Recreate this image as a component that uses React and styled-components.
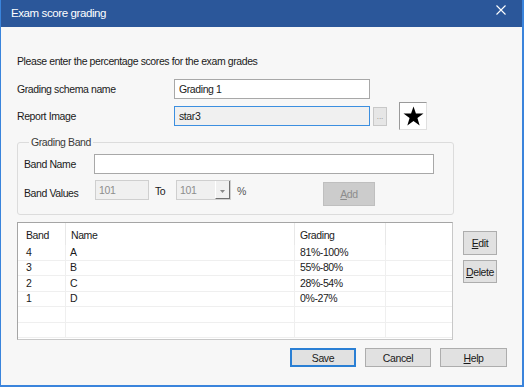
// 시험 점수 등급 설정 대화상자
import styled, { createGlobalStyle } from "styled-components";

const GlobalStyle = createGlobalStyle`
  html, body {
    margin: 0;
    padding: 0;
    background: #f7f7f7;
  }
  * {
    box-sizing: border-box;
  }
`;

const bands = [
  { band: "4", name: "A", grading: "81%-100%" },
  { band: "3", name: "B", grading: "55%-80%" },
  { band: "2", name: "C", grading: "28%-54%" },
  { band: "1", name: "D", grading: "0%-27%" },
  { band: "", name: "", grading: "" },
  { band: "", name: "", grading: "" },
];

function StarIcon() {
  return (
    <svg width="21" height="20" viewBox="0 0 24 23">
      <polygon
        points="12,0.5 14.8,8.6 23.5,8.7 16.5,13.9 19.1,22.3 12,17.3 4.9,22.3 7.5,13.9 0.5,8.7 9.2,8.6"
        fill="#000"
      />
    </svg>
  );
}

function CloseIcon() {
  return (
    <svg width="10" height="10" viewBox="0 0 10 10">
      <path d="M0.5 0.5 L9.5 9.5 M9.5 0.5 L0.5 9.5" stroke="#fff" strokeWidth="1.1" />
    </svg>
  );
}

function App() {
  return (
    <>
      <GlobalStyle />
      <Window>
        <TitleBar>
          <TitleText>Exam score grading</TitleText>
          <CloseButton>
            <CloseIcon />
          </CloseButton>
        </TitleBar>
        <Content>
          <Intro>Please enter the percentage scores for the exam grades</Intro>

          <FormRow>
            <Label>Grading schema name</Label>
            <TextBox $width={196} defaultValue="Grading 1" />
          </FormRow>

          <FormRow $tall>
            <Label>Report Image</Label>
            <TextBox $width={196} $focused defaultValue="star3" />
            <BrowseButton>...</BrowseButton>
            <ImageBox>
              <StarIcon />
            </ImageBox>
          </FormRow>

          <GroupBox>
            <Legend>Grading Band</Legend>
            <BandRow>
              <BandLabel>Band Name</BandLabel>
              <TextBox $width={340} />
            </BandRow>
            <BandRow $gap>
              <BandLabel>Band Values</BandLabel>
              <DisabledBox>101</DisabledBox>
              <ToLabel>To</ToLabel>
              <Combo>
                <span>101</span>
                <ComboArrow>
                  <svg width="5" height="3" viewBox="0 0 5 3">
                    <path d="M0 0 L5 0 L2.5 3 Z" fill="#888" />
                  </svg>
                </ComboArrow>
              </Combo>
              <Percent>%</Percent>
              <AddButton disabled>
                <u>A</u>dd
              </AddButton>
            </BandRow>
          </GroupBox>

          <TableArea>
            <Table>
              <HeaderRow>
                <HeadCell $w={48} $pad={8}>Band</HeadCell>
                <HeadCell $w={229} $pad={5}>Name</HeadCell>
                <HeadCell $w={91} $pad={5}>Grading</HeadCell>
                <HeadCell $w={66} $pad={5} $last></HeadCell>
              </HeaderRow>
              {bands.map((b, i) => (
                <BodyRow key={i}>
                  <Cell $w={48} $pad={8}>{b.band}</Cell>
                  <Cell $w={229} $pad={4}>{b.name}</Cell>
                  <Cell $w={91} $pad={5}>{b.grading}</Cell>
                  <Cell $w={66} $pad={5} $last></Cell>
                </BodyRow>
              ))}
            </Table>
            <SideButtons>
              <DialogButton $w={34} $h={24}>
                <u>E</u>dit
              </DialogButton>
              <DialogButton $w={34} $h={23}>
                <u>D</u>elete
              </DialogButton>
            </SideButtons>
          </TableArea>

          <Footer>
            <DialogButton $w={66} $h={19} $primary>Save</DialogButton>
            <DialogButton $w={66} $h={19}>Cancel</DialogButton>
            <DialogButton $w={67} $h={19}>
              <u>H</u>elp
            </DialogButton>
          </Footer>
        </Content>
      </Window>
    </>
  );
}

const font = `"Liberation Sans", Arial, sans-serif`;

const Window = styled.div`
  width: 524px;
  height: 387px;
  display: flex;
  flex-direction: column;
  background: #f7f7f7;
  border-left: 1px solid #3a84dc;
  border-right: 2px solid #3a84dc;
  border-bottom: 2px solid #3a84dc;
  font-family: ${font};
  font-size: 10.5px;
  letter-spacing: -0.4px;
  color: #1a1a1a;
`;

const TitleBar = styled.div`
  height: 27px;
  flex: none;
  display: flex;
  align-items: center;
  justify-content: space-between;
  background: #2b579a;
  padding: 0 16px 2px 10px;
`;

const TitleText = styled.span`
  color: #ffffff;
  font-size: 11.5px;
  letter-spacing: -0.4px;
`;

const CloseButton = styled.span`
  display: flex;
  margin-top: -6px;
`;

const Content = styled.div`
  flex: 1;
  display: flex;
  flex-direction: column;
  padding: 0 0 0 16px;
`;

const Intro = styled.div`
  margin-top: 28px;
  height: 13px;
  line-height: 13px;
`;

const FormRow = styled.div`
  display: flex;
  align-items: center;
  height: ${(p) => (p.$tall ? "28px" : "20px")};
  margin-top: ${(p) => (p.$tall ? "3px" : "11px")};
`;

const Label = styled.span`
  width: 157px;
  flex: none;
`;

const TextBox = styled.input`
  width: ${(p) => p.$width}px;
  height: 20px;
  flex: none;
  font-family: ${font};
  font-size: 10.5px;
  letter-spacing: -0.4px;
  color: #1a1a1a;
  padding: 0 4px;
  outline: none;
  background: ${(p) => (p.$focused ? "#f0f0f0" : "#ffffff")};
  border: 1px solid ${(p) => (p.$focused ? "#3c8fe0" : "#a8a8a8")};
`;

const BrowseButton = styled.span`
  width: 14px;
  height: 19px;
  margin-left: 3px;
  flex: none;
  display: flex;
  align-items: flex-end;
  justify-content: center;
  padding-bottom: 4px;
  font-size: 8px;
  letter-spacing: 0;
  color: #8a8a8a;
  background: #e6e6e6;
  border: 1px solid #c8c8c8;
`;

const ImageBox = styled.div`
  width: 28px;
  height: 28px;
  margin-left: 12px;
  flex: none;
  display: flex;
  align-items: center;
  justify-content: center;
  background: #ffffff;
  border-top: 1px solid #9a9a9a;
  border-left: 1px solid #9a9a9a;
  border-right: 1px solid #e0e0e0;
  border-bottom: 1px solid #e0e0e0;
`;

const GroupBox = styled.fieldset`
  width: 437px;
  margin: 6px 0 0 0;
  padding: 5px 18px 8px 6px;
  border: 1px solid #dcdcdc;
  border-radius: 3px;
  display: flex;
  flex-direction: column;
`;

const Legend = styled.legend`
  padding: 0 2px;
  margin-left: 5px;
  line-height: 13px;
  color: #3a3a3a;
`;

const BandRow = styled.div`
  display: flex;
  align-items: center;
  height: ${(p) => (p.$gap ? "26px" : "20px")};
  margin-top: ${(p) => (p.$gap ? "6px" : "0")};
`;

const BandLabel = styled.span`
  width: 70px;
  flex: none;
  align-self: center;
`;

const DisabledBox = styled.div`
  width: 54px;
  height: 20px;
  margin-left: 1px;
  flex: none;
  display: flex;
  align-items: center;
  padding: 0 3px;
  color: #8d8d8d;
  background: #f0f0f0;
  border: 1px solid #cfcfcf;
  align-self: flex-start;
`;

const ToLabel = styled.span`
  margin-left: 6px;
  width: 21px;
  align-self: flex-start;
  line-height: 20px;
  margin-top: 1px;
`;

const Combo = styled.div`
  width: 55px;
  height: 20px;
  flex: none;
  display: flex;
  align-items: center;
  justify-content: space-between;
  padding-left: 3px;
  color: #8d8d8d;
  background: #f0f0f0;
  border: 1px solid #cfcfcf;
  align-self: flex-start;
`;

const ComboArrow = styled.span`
  width: 15px;
  height: 18px;
  display: flex;
  align-items: flex-end;
  justify-content: center;
  padding-bottom: 5px;
  background: #f0f0f0;
  border-right: 1px solid #707070;
  border-bottom: 1px solid #707070;
  border-left: 1px solid #ffffff;
`;

const Percent = styled.span`
  margin-left: 6px;
  width: 86px;
  align-self: flex-start;
  line-height: 20px;
  margin-top: 1px;
  color: #555;
`;

const AddButton = styled.button`
  width: 52px;
  height: 24px;
  flex: none;
  margin-top: 2px;
  align-self: flex-start;
  font-family: ${font};
  font-size: 10.5px;
  letter-spacing: -0.4px;
  color: #8c8c8c;
  background: #cccccc;
  border: 1px solid #bfbfbf;
  padding: 0;
`;

const TableArea = styled.div`
  display: flex;
  align-items: flex-start;
  margin-top: 7px;
  gap: 10px;
`;

const Table = styled.div`
  width: 436px;
  height: 118px;
  flex: none;
  background: #ffffff;
  border: 1px solid #a5a5a5;
  border-right-color: #c8c8c8;
  border-bottom-color: #c8c8c8;
  display: flex;
  flex-direction: column;
  overflow: hidden;
`;

const HeaderRow = styled.div`
  display: flex;
  height: 22px;
  flex: none;
`;

const HeadCell = styled.div`
  width: ${(p) => p.$w}px;
  flex: none;
  padding-left: ${(p) => p.$pad}px;
  display: flex;
  align-items: center;
  padding-top: 2px;
  border-right: ${(p) => (p.$last ? "none" : "1px solid #e8e8e8")};
`;

const BodyRow = styled.div`
  display: flex;
  height: 15.5px;
  flex: none;
  border-bottom: 1px solid #efefef;
`;

const Cell = styled.div`
  width: ${(p) => p.$w}px;
  flex: none;
  padding-left: ${(p) => p.$pad}px;
  display: flex;
  align-items: center;
  line-height: 13px;
  border-right: ${(p) => (p.$last ? "none" : "1px solid #efefef")};
`;

const SideButtons = styled.div`
  display: flex;
  flex-direction: column;
  gap: 5px;
  margin-top: 9px;
`;

const DialogButton = styled.button`
  width: ${(p) => p.$w}px;
  height: ${(p) => p.$h}px;
  padding: 0;
  font-family: ${font};
  font-size: 10.5px;
  letter-spacing: -0.4px;
  color: #1a1a1a;
  background: #e1e1e1;
  border: 1px solid ${(p) => (p.$primary ? "#2a7fd4" : "#adadad")};
  box-shadow: ${(p) => (p.$primary ? "inset 0 0 0 1px #2a7fd4" : "none")};
`;

const Footer = styled.div`
  display: flex;
  gap: 9px;
  margin: 8px 0 0 273px;
`;

export default App;
